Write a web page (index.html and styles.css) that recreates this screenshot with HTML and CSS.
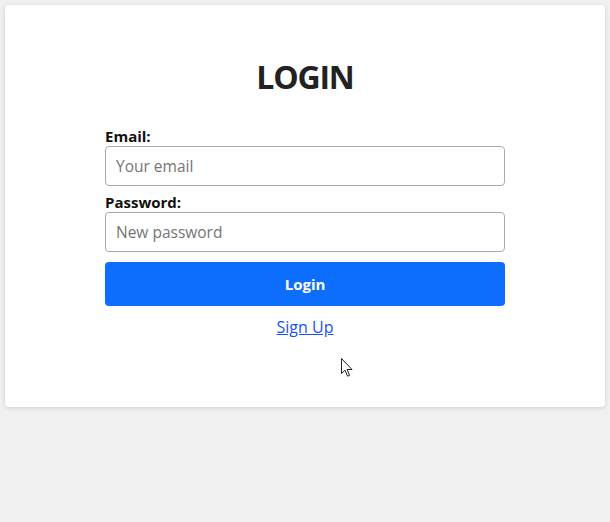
FILE: index.html
```html
<!DOCTYPE html>
<html lang="en">
<head>
    <meta charset="UTF-8">
    <meta name="viewport" content="width=device-width, initial-scale=1.0">
    <title>Login</title>
    <link rel="stylesheet" href="styles.css">
</head>
<body>
    <div class="card">
        <h1>LOGIN</h1>
        <form class="login-form">
            <label for="email">Email:</label>
            <input type="email" id="email" placeholder="Your email">
            <label for="password">Password:</label>
            <input type="password" id="password" placeholder="New password">
            <button type="submit">Login</button>
        </form>
        <p class="signup"><a href="#">Sign Up</a></p>
        <svg class="cursor" width="12" height="19" viewBox="0 0 12 19"><path d="M0.5 0.5 V15.5 L4 12.2 L6.6 18.2 L8.6 17.3 L6.1 11.5 H11 Z" fill="#fff" stroke="#222" stroke-width="1"/></svg>
    </div>
</body>
</html>
```

FILE: styles.css
```css
body {
    font-family: 'Open Sans', 'Noto Sans', sans-serif;
    margin: 0;
    background-color: #f0f0f0;
}
.card {
    position: relative;
    margin: 5px;
    height: 402px;
    box-sizing: border-box;
    padding-top: 50px;
    background-color: white;
    border-radius: 4px;
    box-shadow: 0 1px 4px rgba(0, 0, 0, 0.15);
}
h1 {
    margin: 0 0 27px;
    font-size: 32px;
    line-height: 44px;
    letter-spacing: -1.2px;
    text-align: center;
    color: #222;
}
.login-form {
    width: 400px;
    margin: 0 auto;
    display: flex;
    flex-direction: column;
}
label {
    font-size: 15px;
    font-weight: bold;
    line-height: 20px;
    color: #111;
}
input {
    height: 40px;
    box-sizing: border-box;
    margin-bottom: 6px;
    padding: 0 10px;
    border: 1px solid #aaa;
    border-radius: 4px;
    font-family: inherit;
    font-size: 15.5px;
}
input::placeholder {
    color: #757575;
}
button {
    margin-top: 4px;
    height: 44px;
    border: none;
    border-radius: 4px;
    background-color: #0d6efd;
    color: white;
    font-family: inherit;
    font-size: 15px;
    font-weight: bold;
    cursor: pointer;
}
.signup {
    margin: 11px 0 0;
    line-height: 20px;
    text-align: center;
}
.signup a {
    color: #1a4fff;
    font-size: 16px;
}
.cursor {
    position: absolute;
    left: 336px;
    top: 353px;
}
```
